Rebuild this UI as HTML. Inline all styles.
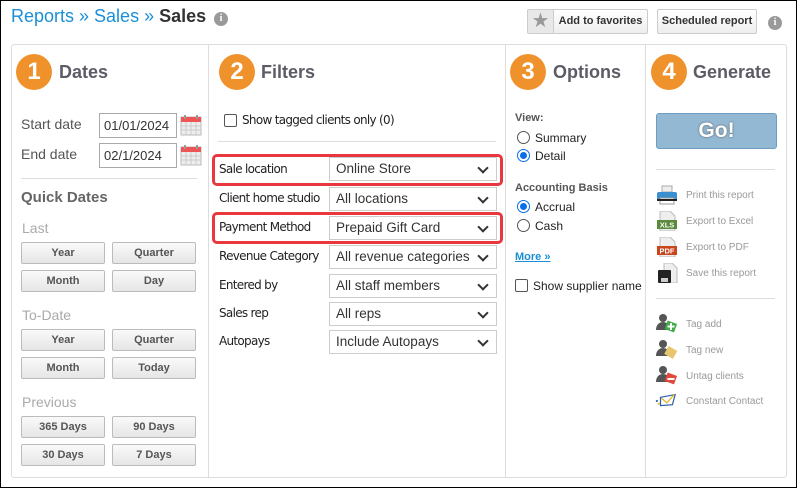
<!DOCTYPE html>
<html><head><meta charset="utf-8"><style>
*{box-sizing:border-box;margin:0;padding:0}
body{width:797px;height:488px;background:#fff;position:relative;overflow:hidden;font-family:"Liberation Sans",Arial,sans-serif}
.frame{position:absolute;left:0;top:0;width:797px;height:488px;border:1px solid #000}
.a{position:absolute;white-space:nowrap}
.crumb{left:11px;top:6px;font-size:18px;color:#1a8fd6}
.crumb b{color:#333}
.info{width:14px;height:14px;border-radius:50%;background:#9a9a9a;color:#fff;font-size:10px;font-weight:bold;text-align:center;line-height:14px;font-family:"Liberation Serif",serif}
.tbtn{border:1px solid #ccc;border-radius:2px;background:linear-gradient(#fff,#eee);font-size:11px;font-weight:bold;color:#333;height:25px;line-height:23px;text-align:center}
.panel{left:11px;top:44px;width:776px;height:434px;border:1px solid #ddd;border-radius:3px}
.vl{width:1px;background:#ddd;top:45px;height:432px}
.num{width:36px;height:36px;border-radius:50%;background:#f0922c;color:#fff;font-size:24px;font-weight:bold;text-align:center;line-height:36px}
.h{font-size:18px;font-weight:bold;color:#5c5c66;top:62px}
.lbl{font-size:14px;color:#555}
.inp{border:1px solid #aaa;height:25px;width:78px;font-size:13px;color:#333;line-height:23px;padding-left:4px}
.hr{height:1px;background:#ddd}
.qb{width:84px;height:22px;border:1px solid #bbb;border-radius:2px;background:linear-gradient(#fafafa,#e6e6e6);font-size:11px;font-weight:bold;color:#555;text-align:center;line-height:20px}
.sub{font-size:14px;color:#aaa}
.fl{font-size:12px;color:#222;font-family:"DejaVu Sans",sans-serif;letter-spacing:-.7px}
.sel{left:329px;width:168px;height:24px;border:1px solid #ccc;font-size:13.5px;color:#333;line-height:22px;padding-left:6px}
.sel:after{content:"";position:absolute;right:9px;top:6px;width:6px;height:6px;border-right:2px solid #333;border-bottom:2px solid #333;transform:rotate(45deg)}
.red{left:212px;width:291px;height:32px;border:3px solid #e8373e;border-radius:5px}
.cb{width:13px;height:13px;border:1px solid #555;border-radius:2px;background:#fff}
.rad{width:13px;height:13px;border:1px solid #555;border-radius:50%;background:#fff}
.rad.on{border:1px solid #0a6ee6}
.rad.on:after{content:"";position:absolute;left:2px;top:2px;width:7px;height:7px;border-radius:50%;background:#0a6ee6}
.ol{font-size:12px;color:#222}
.lk{font-size:10px;color:#999}
.ic{width:22px;height:20px}
</style></head><body>
<div class="frame"></div>
<div class="a crumb">Reports » Sales » <b>Sales</b></div>
<div class="a info" style="left:214px;top:12px">i</div>
<div class="a tbtn" style="left:527px;top:9px;width:121px;padding-left:26px">Add to favorites</div>
<div class="a" style="left:528px;top:10px;width:26px;height:23px;background:#e8e8e8;border-right:1px solid #ccc;color:#999;font-size:20px;text-align:center;line-height:22px">★</div>
<div class="a tbtn" style="left:657px;top:9px;width:100px">Scheduled report</div>
<div class="a info" style="left:768px;top:16px">i</div>

<div class="a panel"></div>
<div class="a vl" style="left:208px"></div>
<div class="a vl" style="left:505px"></div>
<div class="a vl" style="left:645px"></div>

<div class="a num" style="left:16px;top:54px">1</div><div class="a h" style="left:59px">Dates</div>
<div class="a num" style="left:219px;top:54px">2</div><div class="a h" style="left:261px">Filters</div>
<div class="a num" style="left:510px;top:54px">3</div><div class="a h" style="left:553px">Options</div>
<div class="a num" style="left:651px;top:54px">4</div><div class="a h" style="left:693px">Generate</div>

<div class="a lbl" style="left:21px;top:116px">Start date</div>
<div class="a inp" style="left:99px;top:113px">01/01/2024</div>
<div class="a lbl" style="left:21px;top:146px">End date</div>
<div class="a inp" style="left:99px;top:143px">02/1/2024</div>
<svg class="a" style="left:180px;top:114px" width="22" height="22" viewBox="0 0 22 22"><rect x="1" y="3" width="20" height="18" fill="#eee" stroke="#bbb"/><rect x="1" y="3" width="20" height="5" fill="#e55"/><path d="M1 12h20M1 16h20M6 8v13M11 8v13M16 8v13" stroke="#ccc"/><rect x="4" y="1" width="2" height="4" fill="#999"/><rect x="16" y="1" width="2" height="4" fill="#999"/></svg>
<svg class="a" style="left:180px;top:144px" width="22" height="22" viewBox="0 0 22 22"><rect x="1" y="3" width="20" height="18" fill="#eee" stroke="#bbb"/><rect x="1" y="3" width="20" height="5" fill="#e55"/><path d="M1 12h20M1 16h20M6 8v13M11 8v13M16 8v13" stroke="#ccc"/><rect x="4" y="1" width="2" height="4" fill="#999"/><rect x="16" y="1" width="2" height="4" fill="#999"/></svg>
<div class="a hr" style="left:21px;top:178px;width:176px"></div>
<div class="a" style="left:21px;top:189px;font-size:15px;font-weight:bold;color:#666">Quick Dates</div>
<div class="a sub" style="left:22px;top:220px">Last</div>
<div class="a qb" style="left:21px;top:242px">Year</div><div class="a qb" style="left:112px;top:242px">Quarter</div>
<div class="a qb" style="left:21px;top:270px">Month</div><div class="a qb" style="left:112px;top:270px">Day</div>
<div class="a sub" style="left:22px;top:307px">To-Date</div>
<div class="a qb" style="left:21px;top:329px">Year</div><div class="a qb" style="left:112px;top:329px">Quarter</div>
<div class="a qb" style="left:21px;top:357px">Month</div><div class="a qb" style="left:112px;top:357px">Today</div>
<div class="a sub" style="left:22px;top:394px">Previous</div>
<div class="a qb" style="left:21px;top:416px">365 Days</div><div class="a qb" style="left:112px;top:416px">90 Days</div>
<div class="a qb" style="left:21px;top:444px">30 Days</div><div class="a qb" style="left:112px;top:444px">7 Days</div>

<div class="a cb" style="left:224px;top:114px"></div>
<div class="a fl" style="left:242px;top:113px">Show tagged clients only (0)</div>
<div class="a hr" style="left:218px;top:141px;width:278px"></div>
<div class="a red" style="top:154px"></div>
<div class="a red" style="top:212px"></div>
<div class="a fl" style="left:219px;top:162px">Sale location</div><div class="a sel" style="top:157px">Online Store</div>
<div class="a fl" style="left:219px;top:191px">Client home studio</div><div class="a sel" style="top:187px">All locations</div>
<div class="a fl" style="left:219px;top:220px">Payment Method</div><div class="a sel" style="top:216px">Prepaid Gift Card</div>
<div class="a fl" style="left:219px;top:249px">Revenue Category</div><div class="a sel" style="top:245px">All revenue categories</div>
<div class="a fl" style="left:219px;top:278px">Entered by</div><div class="a sel" style="top:274px">All staff members</div>
<div class="a fl" style="left:219px;top:306px">Sales rep</div><div class="a sel" style="top:302px">All reps</div>
<div class="a fl" style="left:219px;top:334px">Autopays</div><div class="a sel" style="top:330px">Include Autopays</div>

<div class="a" style="left:515px;top:112px;font-size:11px;font-weight:bold;color:#555">View:</div>
<div class="a rad" style="left:517px;top:131px"></div><div class="a ol" style="left:535px;top:131px">Summary</div>
<div class="a rad on" style="left:517px;top:149px"></div><div class="a ol" style="left:535px;top:149px">Detail</div>
<div class="a" style="left:515px;top:182px;font-size:11px;font-weight:bold;color:#555">Accounting Basis</div>
<div class="a rad on" style="left:517px;top:200px"></div><div class="a ol" style="left:535px;top:200px">Accrual</div>
<div class="a rad" style="left:517px;top:219px"></div><div class="a ol" style="left:535px;top:219px">Cash</div>
<div class="a" style="left:515px;top:251px;font-size:11px;font-weight:bold;color:#1a8fd6;text-decoration:underline">More »</div>
<div class="a cb" style="left:515px;top:279px"></div><div class="a ol" style="left:533px;top:279px">Show supplier name</div>

<div class="a" style="left:656px;top:113px;width:121px;height:36px;background:#93b8d3;border:1px solid #6d9dc2;border-radius:3px;color:#fff;font-size:21px;font-weight:bold;text-align:center;line-height:34px;text-shadow:0 0 2px #555">Go!</div>
<div class="a hr" style="left:656px;top:169px;width:119px"></div>
<svg class="a ic" style="left:656px;top:185px" viewBox="0 0 22 20"><rect x="6" y="1" width="10" height="6" fill="#eee" stroke="#aaa"/><rect x="1" y="7" width="20" height="8" rx="2" fill="#3a8fd0"/><rect x="4" y="13" width="14" height="6" fill="#fff" stroke="#999"/><rect x="1" y="14" width="20" height="2" fill="#222"/></svg>
<div class="a lk" style="left:686px;top:190px">Print this report</div>
<svg class="a ic" style="left:656px;top:211px" viewBox="0 0 22 20"><path d="M4 0h10l5 5v15H4z" fill="#eee" stroke="#bbb"/><rect x="1" y="9" width="20" height="9" fill="#5c8a3c"/><text x="11" y="16.5" font-size="7.5" font-weight="bold" fill="#fff" text-anchor="middle" font-family="Liberation Sans">XLS</text></svg>
<div class="a lk" style="left:686px;top:216px">Export to Excel</div>
<svg class="a ic" style="left:656px;top:237px" viewBox="0 0 22 20"><path d="M4 0h10l5 5v15H4z" fill="#eee" stroke="#bbb"/><rect x="1" y="9" width="20" height="9" fill="#c8461d"/><text x="11" y="16.5" font-size="7.5" font-weight="bold" fill="#fff" text-anchor="middle" font-family="Liberation Sans">PDF</text></svg>
<div class="a lk" style="left:686px;top:242px">Export to PDF</div>
<svg class="a ic" style="left:656px;top:263px" viewBox="0 0 22 20"><path d="M8 0h8l5 5v15H8z" fill="#eee" stroke="#bbb"/><rect x="2" y="7" width="13" height="13" rx="1" fill="#222"/><rect x="5" y="15" width="7" height="4" fill="#ccc"/></svg>
<div class="a lk" style="left:686px;top:268px">Save this report</div>
<div class="a hr" style="left:656px;top:298px;width:119px"></div>
<svg class="a ic" style="left:656px;top:313px" viewBox="0 0 22 20"><circle cx="7" cy="5" r="4" fill="#555"/><path d="M0 17c0-6 4-8 7-8s7 2 7 8z" fill="#555"/><rect x="10" y="9" width="10" height="9" fill="#3eaa48" transform="rotate(20 15 13)"/><path d="M15 10v7M11.5 13.5h7" stroke="#fff" stroke-width="2"/></svg>
<div class="a lk" style="left:686px;top:319px">Tag add</div>
<svg class="a ic" style="left:656px;top:339px" viewBox="0 0 22 20"><circle cx="7" cy="5" r="4" fill="#555"/><path d="M0 17c0-6 4-8 7-8s7 2 7 8z" fill="#555"/><rect x="10" y="9" width="10" height="9" fill="#e7c66d" transform="rotate(30 15 13)"/></svg>
<div class="a lk" style="left:686px;top:345px">Tag new</div>
<svg class="a ic" style="left:656px;top:365px" viewBox="0 0 22 20"><circle cx="7" cy="5" r="4" fill="#555"/><path d="M0 17c0-6 4-8 7-8s7 2 7 8z" fill="#555"/><rect x="10" y="9" width="10" height="9" fill="#e2483c" transform="rotate(20 15 13)"/><path d="M11.5 14h7" stroke="#fff" stroke-width="2"/></svg>
<div class="a lk" style="left:686px;top:371px">Untag clients</div>
<svg class="a ic" style="left:655px;top:391px" viewBox="0 0 24 20"><path d="M6 6l16-3-3 11-13 1z" fill="#fff" stroke="#2a5ea8" stroke-width="1.3"/><path d="M7 7l6 5 8-9" fill="none" stroke="#e8b020" stroke-width="1.3"/><rect x="1" y="9" width="2" height="2" fill="#2a5ea8"/><rect x="3" y="12" width="2" height="2" fill="#e8b020"/></svg>
<div class="a lk" style="left:686px;top:396px">Constant Contact</div>
</body></html>
